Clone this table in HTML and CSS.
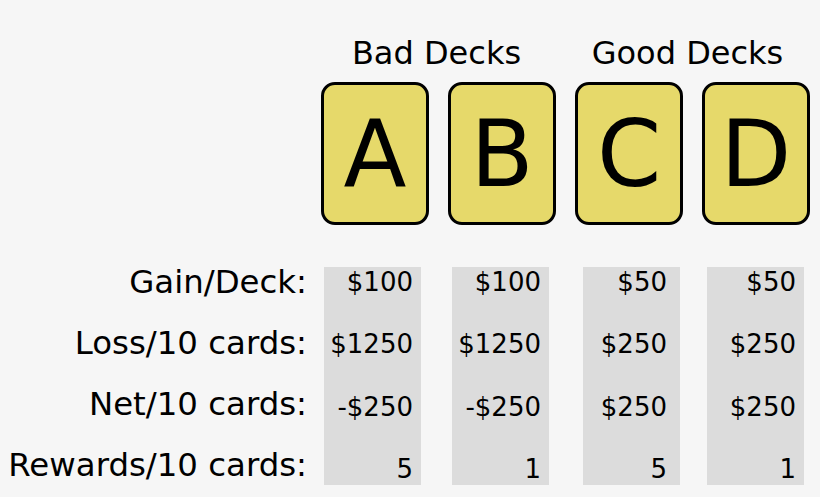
FILE: index.html
```html
<!DOCTYPE html>
<html>
<head>
<meta charset="utf-8">
<link rel="stylesheet" href="styles.css">
</head>
<body>
<div class="page">
  <div class="headers">
    <div class="group">Bad Decks</div>
    <div class="group good">Good Decks</div>
  </div>
  <div class="cards">
    <div class="card">A</div>
    <div class="card">B</div>
    <div class="card">C</div>
    <div class="card">D</div>
  </div>
  <div class="table">
    <div class="labels">
      <div class="label">Gain/Deck:</div>
      <div class="label">Loss/10 cards:</div>
      <div class="label">Net/10 cards:</div>
      <div class="label">Rewards/10 cards:</div>
    </div>
    <div class="col c1">
      <div class="val">$100</div>
      <div class="val">$1250</div>
      <div class="val">-$250</div>
      <div class="val">5</div>
    </div>
    <div class="col c2">
      <div class="val">$100</div>
      <div class="val">$1250</div>
      <div class="val">-$250</div>
      <div class="val">1</div>
    </div>
    <div class="col c3">
      <div class="val">$50</div>
      <div class="val">$250</div>
      <div class="val">$250</div>
      <div class="val">5</div>
    </div>
    <div class="col c4">
      <div class="val">$50</div>
      <div class="val">$250</div>
      <div class="val">$250</div>
      <div class="val">1</div>
    </div>
  </div>
</div>
</body>
</html>
```
FILE: styles.css
```css
html, body {
  margin: 0;
  padding: 0;
  background: #f6f6f6;
}
body {
  width: 820px;
  height: 497px;
  overflow: hidden;
  font-family: "DejaVu Sans", sans-serif;
  color: #000;
}
.page {
  padding-top: 35px;
}
.headers {
  display: flex;
  padding-left: 311px;
  font-size: 32px;
  line-height: 37px;
}
.group {
  width: 254px;
  text-align: center;
  padding-right: 3px;
  box-sizing: border-box;
}
.group.good {
  padding-right: 9px;
}
.cards {
  display: flex;
  gap: 19px;
  padding-left: 321px;
  margin-top: 10px;
}
.card {
  width: 108px;
  height: 143px;
  box-sizing: border-box;
  border: 3px solid #000;
  border-radius: 14px;
  background: #e6d96a;
  font-size: 92px;
  line-height: 92px;
  display: flex;
  align-items: center;
  justify-content: center;
  padding-top: 3px;
}
.table {
  display: flex;
  align-items: flex-start;
  margin-top: 39px;
}
.labels {
  width: 307px;
  text-align: right;
  font-size: 32.4px;
  line-height: 37px;
  display: flex;
  flex-direction: column;
  gap: 24px;
}
.col {
  margin-top: 3px;
  width: 97px;
  height: 218px;
  box-sizing: border-box;
  background: #dcdcdc;
  text-align: right;
  font-size: 26px;
  line-height: 30px;
  padding-right: 8px;
  display: flex;
  flex-direction: column;
  gap: 32.3px;
}
.c1 { margin-left: 17px; }
.c2 { margin-left: 31px; }
.c3 { margin-left: 34px; padding-right: 13px; }
.c4 { margin-left: 27px; }
```
